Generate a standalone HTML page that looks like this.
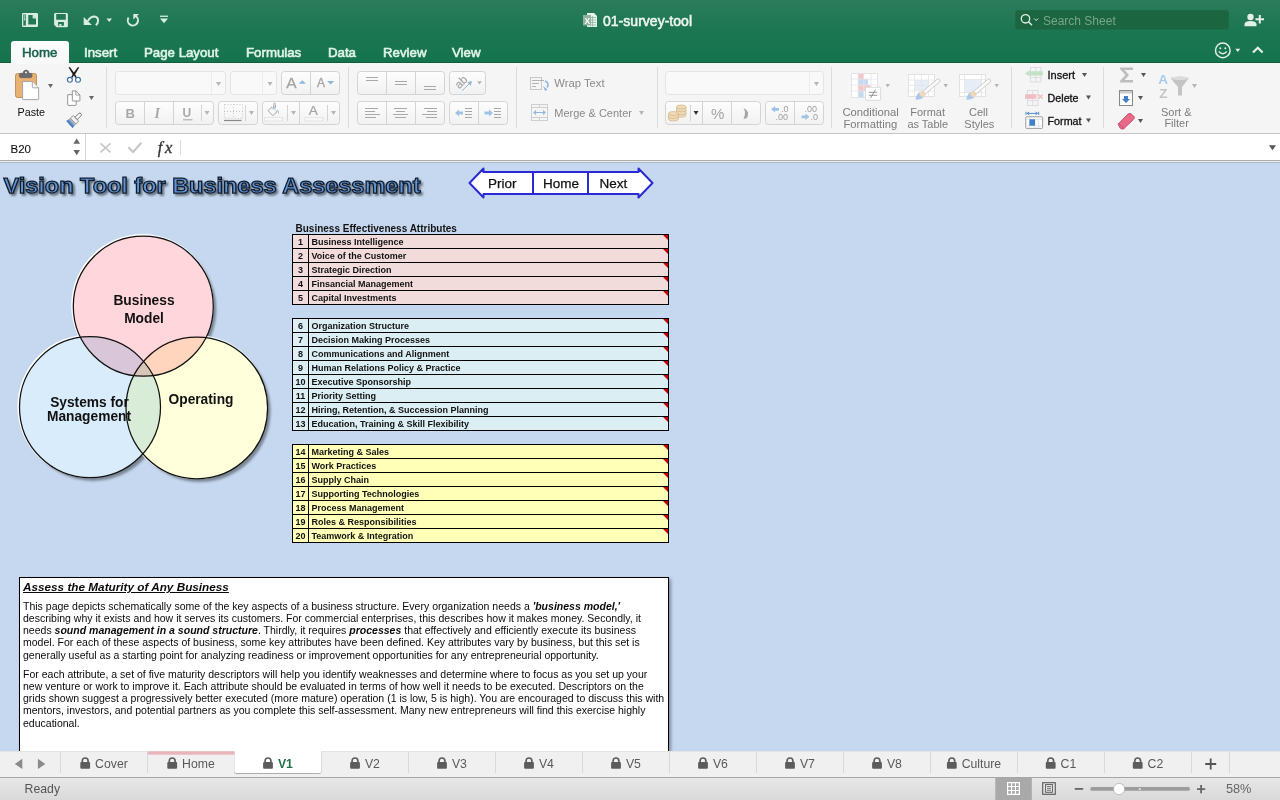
<!DOCTYPE html>
<html><head><meta charset="utf-8">
<style>
*{margin:0;padding:0;box-sizing:border-box}
html,body{width:1280px;height:800px;overflow:hidden;font-family:"Liberation Sans",sans-serif;background:#c5d8ef}
.a{position:absolute}
#title{left:0;top:0;width:1280px;height:63px;background:linear-gradient(#2b7c5a,#1c7652 50%,#14744e 98%);border-bottom:1px solid #195a3d}
#ribbon{left:0;top:63px;width:1280px;height:71px;background:#f5f5f5;border-top:1px solid #ecfbf3;border-bottom:1px solid #c6c6c6}
#fbar{left:0;top:134px;width:1280px;height:29px;background:#fff}
#sheet{left:0;top:163px;width:1280px;height:588px;background:#c5d8ef;overflow:hidden}
#tabs{left:0;top:751px;width:1280px;height:27px;background:#efefef;border-top:1px solid #d0d0d0;border-bottom:1px solid #b5b5b5}
#status{left:0;top:778px;width:1280px;height:22px;background:linear-gradient(#e3e3e3,#d9d9d9)}
.tab{color:#e0f3e7;font-size:13.25px;-webkit-text-stroke:0.6px #e0f3e7;top:45px;white-space:nowrap}

.tb{left:292px;width:377px;border:1px solid #000;border-bottom:none}
.tr{left:0;width:375px;height:14px;border-bottom:1px solid #000}
.tn{position:absolute;left:0;top:0;width:16px;height:13px;border-right:1px solid #000;text-align:center;font-size:9px;font-weight:bold;line-height:14.5px;color:#111}
.tt{position:absolute;left:18.5px;top:0;font-size:9px;font-weight:bold;line-height:14.5px;color:#111;white-space:nowrap}
.ci{position:absolute;right:0;top:0;width:0;height:0;border-top:5px solid #c00000;border-left:5px solid transparent}
#tbox{left:19px;top:414px;width:650px;height:200px;background:#fff;border:1.5px solid #000;box-shadow:2px 2px 3px rgba(40,50,70,0.45)}
#tbox p{position:absolute;left:3px;font-size:10.53px;line-height:12px;color:#0a0a0a;white-space:nowrap}
</style></head><body>
<div id="title" class="a">
  <div class="a" style="left:11px;top:41px;width:58px;height:23px;background:linear-gradient(#fcfcfc,#f8f8f8);border-radius:3px 3px 0 0;z-index:2"></div>
  <div class="a tab" style="left:22px;color:#1b6350;-webkit-text-stroke:0.55px #1b6350;z-index:3">Home</div>
  <div class="a tab" style="left:84px">Insert</div>
  <div class="a tab" style="left:144px">Page Layout</div>
  <div class="a tab" style="left:246px">Formulas</div>
  <div class="a tab" style="left:328px">Data</div>
  <div class="a tab" style="left:383px">Review</div>
  <div class="a tab" style="left:452px">View</div>
  <svg class="a" style="left:0;top:0" width="1280" height="63" viewBox="0 0 1280 63" font-family="Liberation Sans">
 <path fill-rule="evenodd" fill="#d8ecdf" d="M22 14.2 Q22 12.9 23.3 12.9 L36.7 12.9 Q38 12.9 38 14.2 L38 25.7 Q38 27 36.7 27 L23.3 27 Q22 27 22 25.7 Z M23.3 14.6 L25.8 14.6 L25.8 25.4 L23.3 25.4 Z M28.3 15 L32.6 15 L36 18.4 L36 24.6 L28.3 24.6 Z"/>
 <g fill="#d8ecdf"><circle cx="24.55" cy="15.9" r="0.75"/><circle cx="24.55" cy="17.9" r="0.75"/><circle cx="24.55" cy="19.7" r="0.75"/></g>
 <path d="M32.6 15 L32.6 17.2 Q32.6 18.4 33.8 18.4 L36 18.4 Z" fill="#d8ecdf"/>
 <path fill-rule="evenodd" fill="#d8ecdf" d="M54.1 14.2 Q54.1 12.9 55.4 12.9 L66.6 12.9 Q67.9 12.9 67.9 14.2 L67.9 25.9 Q67.9 27.2 66.6 27.2 L56.6 27.2 L54.1 24.7 Z M56.2 14.1 L65.8 14.1 L65.8 19.7 L56.2 19.7 Z M58.1 22 L63.9 22 L63.9 25.8 L58.1 25.8 Z"/>
 <rect x="59.3" y="24" width="2.1" height="1.8" fill="#d8ecdf"/>
 <path d="M83.7 17 L83.7 25 L91.9 25 Z" fill="#d8ecdf"/>
 <path d="M87.8 21 Q90.5 16.5 94.3 16.5 Q98.1 16.7 98.1 20.8 Q98.1 23.3 95.8 25.2" fill="none" stroke="#d8ecdf" stroke-width="2"/>
 <path d="M106.5 18.5 L112 18.5 L109.2 22 Z" fill="#d8ecdf"/>
 <path d="M128.6 17.6 A5.1 5.1 0 1 0 136 16.3" fill="none" stroke="#d8ecdf" stroke-width="2"/>
 <path d="M133.3 14 L139 14 L133.3 19.6 Z" fill="#d8ecdf"/>
 <rect x="160" y="15.6" width="8" height="1.3" fill="#d8ecdf"/>
 <path d="M160 18.5 L168 18.5 L164 23.2 Z" fill="#d8ecdf"/>
 <!-- excel doc icon -->
 <path d="M587 13 L594 13 L597 16 L597 27 L587 27 Z" fill="#e9f2ec"/>
 <g stroke="#8fb59e" stroke-width="0.8"><line x1="590" y1="17.5" x2="596" y2="17.5"/><line x1="590" y1="20" x2="596" y2="20"/><line x1="590" y1="22.5" x2="596" y2="22.5"/><line x1="590" y1="25" x2="596" y2="25"/><line x1="592.5" y1="16" x2="592.5" y2="26.5"/></g>
 <rect x="583" y="15" width="8" height="10.5" fill="#8fb39d"/>
 <text x="584.6" y="23.5" font-size="8.5" font-weight="bold" fill="#fff">X</text>
 <text x="603" y="26" font-size="14" fill="#eef6f1" stroke="#eef6f1" stroke-width="0.55" textLength="89">01-survey-tool</text>
 <!-- search box -->
 <rect x="1015.3" y="10.3" width="213.5" height="19.3" rx="3" fill="#1b6541"/>
 <circle cx="1025.5" cy="18.8" r="4.2" fill="none" stroke="#e1eee6" stroke-width="1.3"/>
 <line x1="1028.5" y1="21.8" x2="1032" y2="25.3" stroke="#e1eee6" stroke-width="1.5"/>
 <path d="M1034.2 18.5 L1036.2 20.5 L1038.2 18.5" fill="none" stroke="#e1eee6" stroke-width="1"/>
 <text x="1043" y="25.3" font-size="12" fill="#78a68b">Search Sheet</text>
 <!-- person add -->
 <circle cx="1250.5" cy="17" r="3.2" fill="#e4efe8"/>
 <path d="M1244.5 26.3 L1244.5 24 Q1245 21 1250.5 21 Q1256 21 1256.5 24 L1256.5 26.3 Z" fill="#e4efe8"/>
 <path d="M1259.8 15 L1259.8 23.5 M1255.5 19.2 L1264 19.2" stroke="#e4efe8" stroke-width="2"/>
 <!-- smiley -->
 <circle cx="1222.8" cy="50.4" r="7.3" fill="none" stroke="#e4efe8" stroke-width="1.5"/>
 <circle cx="1220.3" cy="48.3" r="1" fill="#e4efe8"/><circle cx="1225.3" cy="48.3" r="1" fill="#e4efe8"/>
 <path d="M1218.8 51.5 Q1222.8 56 1226.8 51.5" fill="none" stroke="#e4efe8" stroke-width="1.3"/>
 <path d="M1235.3 48.8 L1240.3 48.8 L1237.8 52 Z" fill="#e4efe8"/>
 <path d="M1253 52.5 L1257.8 47.8 L1262.6 52.5" fill="none" stroke="#e4efe8" stroke-width="2.2"/>
</svg>

</div>
<div id="ribbon" class="a"><svg class="a" style="left:0;top:-1px" width="1280" height="71" viewBox="0 63 1280 71" font-family="Liberation Sans">
 <defs>
  <linearGradient id="bg1" x1="0" y1="0" x2="0" y2="1"><stop offset="0" stop-color="#fdfdfd"/><stop offset="1" stop-color="#f1f1f1"/></linearGradient>
 </defs>
 <g stroke="#dcdcdc" stroke-width="1">
  <line x1="106.5" y1="67" x2="106.5" y2="128"/>
  <line x1="348.5" y1="67" x2="348.5" y2="128"/>
  <line x1="516.5" y1="67" x2="516.5" y2="128"/>
  <line x1="657.5" y1="67" x2="657.5" y2="128"/>
  <line x1="831.5" y1="67" x2="831.5" y2="128"/>
  <line x1="1011.5" y1="67" x2="1011.5" y2="128"/>
  <line x1="1103.5" y1="67" x2="1103.5" y2="128"/>
 </g>
 <!-- paste -->
 <rect x="15.5" y="73.5" width="21" height="24" rx="2" fill="#e9b272" stroke="#c08a55" stroke-width="0.9"/>
 <path d="M19.3 75 Q19.3 73.2 21.2 73.2 L23 73.2 Q23.3 70 26 70 Q28.7 70 29 73.2 L30.2 73.2 Q32.1 73.2 32.1 75 L32.1 75.8 Q32.1 77.7 30.2 77.7 L21.2 77.7 Q19.3 77.7 19.3 75.8 Z" fill="#6a6a6e" stroke="#555" stroke-width="0.5"/>
 <rect x="25" y="71.7" width="2" height="1.5" fill="#e8e8e8"/>
 <path d="M22.6 81.5 L32.3 81.5 L38.6 87.8 L38.6 99 Q38.6 99.6 38 99.6 L23.2 99.6 Q22.6 99.6 22.6 99 Z" fill="#fff" stroke="#9a9ea6" stroke-width="0.9"/>
 <path d="M32.3 81.5 L32.3 86.8 Q32.3 87.8 33.3 87.8 L38.6 87.8" fill="#f6f6f6" stroke="#9a9ea6" stroke-width="0.9"/>
 <path d="M48 84 L53 84 L50.5 88 Z" fill="#666"/>
 <text x="17.5" y="116" font-size="10.75" fill="#111">Paste</text>
 <!-- cut -->
 <path d="M68.6 67.6 L69.8 67 L75.2 74.2 L73.6 75.8 Z" fill="#1b1b1b"/>
 <path d="M79.2 67.6 L78 67 L72.6 74.2 L74.2 75.8 Z" fill="#1b1b1b"/>
 <path d="M73.9 72.5 L71 77.3 L72.2 77.9 L73.9 75.3 L75.6 77.9 L76.8 77.3 Z" fill="#1b1b1b"/>
 <circle cx="69.9" cy="79.8" r="2.45" fill="#fff" stroke="#3b70aa" stroke-width="1.15"/>
 <circle cx="78" cy="79.8" r="2.45" fill="#fff" stroke="#3b70aa" stroke-width="1.15"/>
 <!-- copy -->
 <path d="M67.7 94.7 L76.2 94.7 L76.2 104.9 Q76.2 105.4 75.7 105.4 L68.2 105.4 Q67.7 105.4 67.7 104.9 Z" fill="#fff" stroke="#8a8a8a" stroke-width="0.9"/>
 <path d="M72.3 90.9 L75.8 90.9 L79.9 95 L79.9 100.5 Q79.9 101 79.4 101 L72.8 101 Q72.3 101 72.3 100.5 Z" fill="#fff" stroke="#8a8a8a" stroke-width="0.9"/>
 <path d="M75.8 90.9 L75.8 95 L79.9 95" fill="none" stroke="#8a8a8a" stroke-width="0.8"/>
 <path d="M89 96 L94 96 L91.5 100 Z" fill="#666"/>
 <!-- brush -->
 <linearGradient id="brg" x1="0" y1="0" x2="1" y2="0"><stop offset="0" stop-color="#2b64ab"/><stop offset="0.5" stop-color="#6d9bd0"/><stop offset="1" stop-color="#d8c2ac"/></linearGradient>
 <g transform="translate(69.45,124.5) rotate(-43)">
  <path d="M0 -4.7 L5 -4.2 L5 4.2 L0 4.7 Z" fill="url(#brg)"/>
  <path d="M5 -4.2 L9 -3.8 L9 3.8 L5 4.2 Z" fill="#f3efec" stroke="#7d7d7d" stroke-width="0.7"/>
  <path d="M9 -1.6 L14.3 -1.6 Q15.9 -1.6 15.9 0 Q15.9 1.6 14.3 1.6 L9 1.6 Z" fill="#fbfbfb" stroke="#6f6f6f" stroke-width="0.85"/>
 </g>
 <!-- font boxes -->
 <g fill="#f9f9f9" stroke="#e4e4e4">
  <rect x="115.5" y="71.5" width="110" height="23" rx="3"/>
  <rect x="230.5" y="71.5" width="46" height="23" rx="3"/>
 </g>
 <g fill="url(#bg1)" stroke="#d4d4d4">
  <rect x="281.5" y="71.5" width="58" height="23" rx="3"/>
  <rect x="115.5" y="101.5" width="98" height="23" rx="3"/>
  <rect x="218.5" y="101.5" width="39" height="23" rx="3"/>
  <rect x="262.5" y="101.5" width="77" height="23" rx="3"/>
  <rect x="357.5" y="71.5" width="87" height="23" rx="3"/>
  <rect x="449.5" y="71.5" width="36" height="23" rx="3"/>
  <rect x="357.5" y="101.5" width="87" height="23" rx="3"/>
  <rect x="449.5" y="101.5" width="58" height="23" rx="3"/>
  <rect x="665.5" y="101.5" width="95" height="23" rx="3"/>
  <rect x="765.5" y="101.5" width="58" height="23" rx="3"/>
 </g>
 <rect x="665.5" y="71.5" width="158" height="23" rx="3" fill="#f9f9f9" stroke="#e4e4e4"/>
 <g stroke="#ececec">
  <line x1="211.5" y1="72" x2="211.5" y2="94"/>
  <line x1="262.5" y1="72" x2="262.5" y2="94"/>
  <line x1="809.5" y1="72" x2="809.5" y2="94"/>
 </g>
 <g stroke="#d4d4d4">
  <line x1="310.5" y1="72" x2="310.5" y2="94"/>
  <line x1="144.5" y1="102" x2="144.5" y2="124"/>
  <line x1="173.5" y1="102" x2="173.5" y2="124"/>
  <line x1="201.5" y1="105" x2="201.5" y2="121"/>
  <line x1="245.5" y1="105" x2="245.5" y2="121"/>
  <line x1="287.5" y1="105" x2="287.5" y2="121"/>
  <line x1="299.5" y1="102" x2="299.5" y2="124"/>
  <line x1="327.5" y1="105" x2="327.5" y2="121"/>
  <line x1="386.5" y1="72" x2="386.5" y2="94"/>
  <line x1="415.5" y1="72" x2="415.5" y2="94"/>
  <line x1="386.5" y1="102" x2="386.5" y2="124"/>
  <line x1="415.5" y1="102" x2="415.5" y2="124"/>
  <line x1="478.5" y1="102" x2="478.5" y2="124"/>
  <line x1="690.5" y1="105" x2="690.5" y2="121"/>
  <line x1="702.5" y1="102" x2="702.5" y2="124"/>
  <line x1="731.5" y1="102" x2="731.5" y2="124"/>
  <line x1="794.5" y1="102" x2="794.5" y2="124"/>
 </g>
 <!-- small dropdown arrows (gray) -->
 <g fill="#b5b5b5">
  <path d="M216 82 L221 82 L218.5 86 Z"/>
  <path d="M267.5 82 L272.5 82 L270 86 Z"/>
  <path d="M204.5 111 L209.5 111 L207 115 Z"/>
  <path d="M249 111 L254 111 L251.5 115 Z"/>
  <path d="M291 111 L296 111 L293.5 115 Z"/>
  <path d="M331 111 L336 111 L333.5 115 Z"/>
  <path d="M477 81.3 L482 81.3 L479.5 84.5 Z"/>
  <path d="M639 111 L644 111 L641.5 115 Z"/>
  <path d="M814 82 L819 82 L816.5 86 Z"/>
  <path d="M885.5 84 L890 84 L887.7 87.5 Z"/>
  <path d="M943.5 84 L948 84 L945.7 87.5 Z"/>
  <path d="M994.5 84 L999 84 L996.7 87.5 Z"/>
  <path d="M1192 84 L1197 84 L1194.5 88 Z"/>
 </g>
 <path d="M693.5 111 L698.5 111 L696 115 Z" fill="#333"/>
 <!-- A^ Av -->
 <text x="286.3" y="88" font-size="15.5" fill="#a3a3a3" stroke="#a3a3a3" stroke-width="0.3">A</text>
 <path d="M298.8 83.8 L305.9 83.8 L302.35 80.3 Z" fill="#8db7de"/>
 <text x="317" y="87" font-size="12" fill="#a3a3a3" stroke="#a3a3a3" stroke-width="0.3">A</text>
 <path d="M327 81 L334.3 81 L330.65 84.5 Z" fill="#8db7de"/>
 <!-- B I U -->
 <text x="125.5" y="118" font-size="13" font-weight="bold" fill="#a8a8a8">B</text>
 <text x="154.5" y="118" font-size="14" font-style="italic" font-weight="bold" fill="#a8a8a8" font-family="Liberation Serif">I</text>
 <text x="182.5" y="117" font-size="12" font-weight="bold" fill="#a8a8a8">U</text>
 <line x1="183" y1="119.8" x2="192.5" y2="119.8" stroke="#a8a8a8" stroke-width="1.1"/>
 <!-- border icon -->
 <g stroke="#c4c4c4" stroke-width="1" stroke-dasharray="1 2">
  <rect x="224.5" y="104.5" width="18" height="14" fill="none"/>
  <line x1="233.5" y1="104" x2="233.5" y2="119"/>
  <line x1="224" y1="111.5" x2="243" y2="111.5"/>
 </g>
 <line x1="224" y1="120.5" x2="241.5" y2="120.5" stroke="#888" stroke-width="1.2"/>
 <!-- fill bucket -->
 <path d="M268.1 110.6 L272 106.9 L277 111.9 L272.8 115.6 Z" fill="#fafafa" stroke="#a6a6a6" stroke-width="1"/>
 <path d="M270.5 108.6 L274.3 105.6 L276.6 111.5 Z" fill="#cfe3f5"/>
 <path d="M273.8 109 L273.8 104.5 Q273.8 103 274.6 103 Q275.4 103 275.4 104.5 L275.4 108" fill="none" stroke="#a0a0a0" stroke-width="0.9"/>
 <path d="M277 109.5 Q279.5 111 278.8 114 L278 112.5 Z" fill="#9fb2c4"/>
 <rect x="264.5" y="117.5" width="18" height="3.5" fill="#f7f7f7" stroke="#e2e2e2" stroke-width="0.8"/>
 <text x="308.8" y="115.3" font-size="13.5" fill="#a3a3a3" stroke="#a3a3a3" stroke-width="0.2">A</text>
 <rect x="305" y="117.5" width="18" height="3.5" fill="#f7f7f7" stroke="#e2e2e2" stroke-width="0.8"/>
 <!-- align icons -->
 <g stroke="#a8a8a8" stroke-width="1">
  <line x1="366" y1="77.5" x2="378" y2="77.5"/><line x1="366" y1="80.5" x2="378" y2="80.5"/>
  <line x1="395" y1="81.5" x2="407" y2="81.5"/><line x1="395" y1="84.5" x2="407" y2="84.5"/>
  <line x1="424" y1="86.5" x2="436" y2="86.5"/><line x1="424" y1="89.5" x2="436" y2="89.5"/>
  <line x1="365" y1="108.5" x2="378" y2="108.5"/><line x1="365" y1="111.5" x2="375" y2="111.5"/><line x1="365" y1="114.5" x2="380" y2="114.5"/><line x1="365" y1="117.5" x2="376" y2="117.5"/>
  <line x1="394" y1="108.5" x2="407" y2="108.5"/><line x1="396" y1="111.5" x2="405" y2="111.5"/><line x1="393" y1="114.5" x2="408" y2="114.5"/><line x1="395" y1="117.5" x2="406" y2="117.5"/>
  <line x1="424" y1="108.5" x2="437" y2="108.5"/><line x1="427" y1="111.5" x2="437" y2="111.5"/><line x1="422" y1="114.5" x2="437" y2="114.5"/><line x1="426" y1="117.5" x2="437" y2="117.5"/>
  <line x1="465" y1="108.5" x2="472" y2="108.5"/><line x1="465" y1="111.5" x2="472" y2="111.5"/><line x1="465" y1="114.5" x2="472" y2="114.5"/><line x1="465" y1="117.5" x2="472" y2="117.5"/>
  <line x1="494" y1="108.5" x2="501" y2="108.5"/><line x1="494" y1="111.5" x2="501" y2="111.5"/><line x1="494" y1="114.5" x2="501" y2="114.5"/><line x1="494" y1="117.5" x2="501" y2="117.5"/>
 </g>
 <path d="M455 113 L459 109.5 L459 111.5 L463 111.5 L463 114.5 L459 114.5 L459 116.5 Z" fill="#9fc3e6"/>
 <path d="M493 113 L489 109.5 L489 111.5 L484.5 111.5 L484.5 114.5 L489 114.5 L489 116.5 Z" fill="#9fc3e6"/>
 <!-- orientation ab -->
 <text x="0" y="0" transform="translate(459.2,89.2) rotate(-45)" font-size="11.5" fill="#a6a6a6" stroke="#a6a6a6" stroke-width="0.2">ab</text>
 <path d="M462 90.8 L470 83" stroke="#98b4cc" stroke-width="1" fill="none"/><path d="M472 81 L467.3 82.2 L470.8 85.7 Z" fill="#98b4cc"/>
 <!-- wrap text icon -->
 <g stroke="#c8c8c8" fill="none">
  <rect x="530.5" y="77.5" width="11" height="12"/>
 </g>
 <g stroke="#b3b3b3">
  <line x1="532" y1="80.5" x2="544" y2="80.5"/><line x1="532" y1="83.5" x2="539" y2="83.5"/><line x1="532" y1="86.5" x2="536" y2="86.5"/>
 </g>
 <path d="M545 81 Q550 83 547 87.5" fill="none" stroke="#8eb8e0" stroke-width="1.6"/>
 <path d="M543 86 L547.5 89.5 L545 91 Z" fill="#8eb8e0"/>
 <text x="554.3" y="87" font-size="11.25" fill="#8a8a8a">Wrap Text</text>
 <!-- merge icon -->
 <g stroke="#cfcfcf" fill="none">
  <rect x="531.5" y="104.5" width="16" height="16"/>
  <line x1="531.5" y1="107.5" x2="547.5" y2="107.5"/><line x1="531.5" y1="117.5" x2="547.5" y2="117.5"/>
  <line x1="539.5" y1="104.5" x2="539.5" y2="107.5"/><line x1="539.5" y1="117.5" x2="539.5" y2="120.5"/>
 </g>
 <path d="M534 112.5 L545 112.5 M536 110.5 L534 112.5 L536 114.5 M543 110.5 L545 112.5 L543 114.5" stroke="#8eb8e0" stroke-width="1.1" fill="none"/>
 <text x="554.3" y="117" font-size="11" fill="#8a8a8a">Merge &amp; Center</text>
 <!-- currency coins -->
 <g stroke="#cdb48c" stroke-width="0.7" fill="#f0dbb5">
  <path d="M676.5 107 L676.5 115.5 A4.8 2 0 0 0 686 115.5 L686 107 Z"/>
  <ellipse cx="681.3" cy="107" rx="4.8" ry="2"/>
  <path d="M676.5 110 A4.8 2 0 0 0 686 110 M676.5 113 A4.8 2 0 0 0 686 113" fill="none"/>
  <path d="M668.5 113.5 L668.5 119 A5 2 0 0 0 678.5 119 L678.5 113.5 Z"/>
  <ellipse cx="673.5" cy="113.5" rx="5" ry="2"/>
  <path d="M668.5 116.3 A5 2 0 0 0 678.5 116.3" fill="none"/>
 </g>
 <text x="711" y="118.5" font-size="15" fill="#a3a3a3">%</text>
 <path d="M743.5 108 Q749.5 110.5 747.5 117 Q746 119.5 743.5 118.5 Q746.5 113 743.5 108 Z" fill="#a5a5a5"/>
 <!-- decimal -->
 <path d="M771 109.2 L775.2 106 L775.2 108 L779 108 L779 110.8 L775.2 110.8 L775.2 112.6 Z" fill="#9fc3e6"/>
 <text x="781" y="112" font-size="9" fill="#a0a0a0">.0</text>
 <text x="775.5" y="120" font-size="9" fill="#a0a0a0">.00</text>
 <text x="804.5" y="112" font-size="9" fill="#a0a0a0">.00</text>
 <path d="M809.5 116.7 L805.3 113.5 L805.3 115.5 L801.5 115.5 L801.5 118.3 L805.3 118.3 L805.3 120 Z" fill="#9fc3e6"/>
 <text x="810.5" y="120" font-size="9" fill="#a0a0a0">.0</text>
 <!-- conditional formatting -->
 <rect x="851.5" y="73.5" width="26" height="24" fill="#fff" stroke="#e0e0e0" stroke-width="0.9"/>
 <rect x="858.1" y="73.8" width="5.7" height="5.3" fill="#f6c6cd"/>
 <rect x="858.1" y="79.1" width="10" height="5.9" fill="#c4daf1"/>
 <rect x="858.1" y="85" width="12.5" height="6" fill="#f6c6cd"/>
 <rect x="858.1" y="91" width="5.7" height="6.3" fill="#c4daf1"/>
 <g stroke="#e6e6e6" stroke-width="0.8">
  <line x1="851.5" y1="79.1" x2="877.5" y2="79.1"/><line x1="851.5" y1="85" x2="877.5" y2="85"/><line x1="851.5" y1="91" x2="877.5" y2="91"/>
  <line x1="858.1" y1="73.5" x2="858.1" y2="97.5"/><line x1="863.8" y1="73.5" x2="863.8" y2="97.5"/><line x1="871" y1="73.5" x2="871" y2="97.5"/>
 </g>
 <rect x="865.6" y="87.3" width="15" height="13" rx="0.8" fill="#fff" stroke="#d6d6d6" stroke-width="0.9"/>
 <path d="M868.8 92.3 L877.2 92.3 M868.8 95.3 L877.2 95.3 M875.5 89.5 L870.5 98.2" stroke="#8c8c8c" stroke-width="0.9"/>
 <!-- format as table / cell styles -->
 <rect x="908.5" y="74.5" width="26" height="22" fill="#fff" stroke="#dedede" stroke-width="0.9"/>
 <rect x="959.5" y="74.5" width="26" height="22" fill="#fff" stroke="#dedede" stroke-width="0.9"/>
 <rect x="914.5" y="80" width="14" height="11" fill="#e6edf7"/>
 <rect x="964.5" y="79.5" width="17" height="13" fill="#e6edf7"/>
 <g stroke="#e4e4e4" stroke-width="0.8">
  <line x1="908.5" y1="80" x2="934.5" y2="80"/><line x1="908.5" y1="85.5" x2="934.5" y2="85.5"/><line x1="908.5" y1="91" x2="934.5" y2="91"/>
  <line x1="914.5" y1="74.5" x2="914.5" y2="96.5"/><line x1="921.5" y1="74.5" x2="921.5" y2="96.5"/><line x1="928.5" y1="74.5" x2="928.5" y2="96.5"/>
  <line x1="959.5" y1="79.5" x2="985.5" y2="79.5"/><line x1="964.5" y1="74.5" x2="964.5" y2="96.5"/><line x1="981.5" y1="74.5" x2="981.5" y2="96.5"/><line x1="959.5" y1="92.5" x2="985.5" y2="92.5"/>
 </g>
 <g id="brush1" transform="translate(915.6,99.75) rotate(-40)">
  <path d="M0 0 Q3 -3.6 8 -3.3 L8 3.3 Q3 3.2 0 0 Z" fill="#a9c9ec"/>
  <ellipse cx="9" cy="0" rx="2.8" ry="3.3" fill="#f1d9b7"/>
  <path d="M11 -1.8 L29.5 -1.8 Q31.3 -1.8 31.3 0 Q31.3 1.8 29.5 1.8 L11 1.8 Z" fill="#fafafa" stroke="#c4c4c4" stroke-width="0.8"/>
 </g>
 <use href="#brush1" x="50.8" y="0"/>
 <text x="842.4" y="115.7" font-size="11.25" fill="#7c7c7c">Conditional</text>
 <text x="843.4" y="127.7" font-size="11.25" fill="#7c7c7c">Formatting</text>
 <text x="910.2" y="115.7" font-size="11" fill="#7c7c7c">Format</text>
 <text x="907.4" y="127.7" font-size="11" fill="#7c7c7c">as Table</text>
 <text x="969" y="115.7" font-size="11" fill="#7c7c7c">Cell</text>
 <text x="964.3" y="127.7" font-size="11" fill="#7c7c7c">Styles</text>
 <!-- insert/delete/format -->
 <g stroke="#dcdcdc" fill="none" stroke-width="0.9">
  <rect x="1030.5" y="67.5" width="10.5" height="14.5"/><line x1="1030.5" y1="77.5" x2="1041" y2="77.5"/><line x1="1035.7" y1="67.5" x2="1035.7" y2="82"/>
  <rect x="1027.5" y="90.5" width="10.5" height="15"/><line x1="1027.5" y1="95" x2="1038" y2="95"/><line x1="1027.5" y1="100.5" x2="1038" y2="100.5"/><line x1="1032.7" y1="90.5" x2="1032.7" y2="105.5"/>
 </g>
 <path d="M1025 73.4 L1029.5 70.2 L1029.5 71.3 L1042.8 71.3 L1042.8 75.5 L1029.5 75.5 L1029.5 76.6 Z" fill="#c3e2c8"/>
 <rect x="1025.1" y="94.3" width="11.2" height="4.6" fill="#f2bcc3"/>
 <path d="M1038.3 94.5 L1042.6 98.8 M1042.6 94.5 L1038.3 98.8" stroke="#f2bcc3" stroke-width="1.3"/>
 <rect x="1025.8" y="116.8" width="16.8" height="11.6" rx="0.8" fill="#fff" stroke="#9a9a9a" stroke-width="1"/>
 <g stroke="#dedede" stroke-width="0.8"><line x1="1026" y1="119.3" x2="1042.3" y2="119.3"/><line x1="1026" y1="125.8" x2="1042.3" y2="125.8"/><line x1="1029.3" y1="117" x2="1029.3" y2="128.3"/><line x1="1035" y1="117" x2="1035" y2="128.3"/><line x1="1038.6" y1="117" x2="1038.6" y2="128.3"/></g>
 <rect x="1029.4" y="119.3" width="5.6" height="6.4" fill="#3f80c8"/>
 <path d="M1027.2 113.4 L1037.5 113.4 M1029.2 112 L1027.2 113.4 L1029.2 114.8 M1035.5 112 L1037.5 113.4 L1035.5 114.8 M1026 111.8 L1026 115 M1038.7 111.8 L1038.7 115" stroke="#3f80c8" stroke-width="0.9" fill="none"/>
 <text x="1047.5" y="79" font-size="11" fill="#111" stroke="#111" stroke-width="0.3">Insert</text>
 <text x="1047.5" y="101.75" font-size="10.75" fill="#111" stroke="#111" stroke-width="0.3">Delete</text>
 <text x="1047.5" y="124.7" font-size="10.75" fill="#111" stroke="#111" stroke-width="0.3">Format</text>
 <g fill="#555">
  <path d="M1082 73 L1087 73 L1084.5 77 Z"/>
  <path d="M1086 95.5 L1091 95.5 L1088.5 99.5 Z"/>
  <path d="M1086 118.5 L1091 118.5 L1088.5 122.5 Z"/>
  <path d="M1141 73 L1146 73 L1143.5 77 Z"/>
  <path d="M1138 96 L1143 96 L1140.5 100 Z"/>
  <path d="M1138 119 L1143 119 L1140.5 123 Z"/>
 </g>
 <!-- sigma -->
 <path d="M1120 67.5 L1133 67.5 L1133 70 L1124.5 70 L1129 75 L1124.5 80 L1133 80 L1133 82.5 L1120 82.5 L1120 81 L1125.5 75 L1120 69 Z" fill="#bdbdbd"/>
 <!-- fill down -->
 <rect x="1119.5" y="90.5" width="13" height="15" fill="#fff" stroke="#888"/>
 <rect x="1120" y="91" width="12" height="2.5" fill="#ccc"/>
 <path d="M1124 96 L1128 96 L1128 99 L1130 99 L1126 103 L1122 99 L1124 99 Z" fill="#3f80c8"/>
 <!-- eraser -->
 <path d="M1118 124 L1128 114 Q1130 112.5 1132 114.5 L1134 116.5 Q1135 118 1133.5 119.5 L1124 128.5 Q1122 130 1120 128 Z" fill="#e96a86" stroke="#c04865" stroke-width="0.8"/>
 <path d="M1118.5 123.5 L1124.5 129" stroke="#c04865" stroke-width="0.8"/>
 <!-- sort filter -->
 <text x="1158.3" y="84" font-size="13.5" font-weight="bold" fill="#a9cbee">A</text>
 <text x="1159.3" y="97.5" font-size="13.5" font-weight="bold" fill="#c4c4c4">Z</text>
 <path d="M1170.5 78 Q1180 75 1189 78 L1182 87 L1182 95.5 L1178 95.5 L1178 87 Z" fill="#c4c4c4"/>
 <ellipse cx="1179.8" cy="78.3" rx="8.5" ry="1.8" fill="#dcdcdc"/>
 <text x="1161" y="116" font-size="11" fill="#7c7c7c">Sort &amp;</text>
 <text x="1164.4" y="127" font-size="11" fill="#7c7c7c">Filter</text>
</svg>
</div>
<div id="fbar" class="a">
<svg class="a" style="left:0;top:0" width="1280" height="29" viewBox="0 134 1280 29" font-family="Liberation Sans">
 <text x="10.5" y="152.7" font-size="11.5" fill="#111" stroke="#111" stroke-width="0.1">B20</text>
 <path d="M73.4 143.8 L80 143.8 L76.7 138.6 Z M73.4 150 L80 150 L76.7 155.3 Z" fill="#666"/>
 <line x1="85.5" y1="134" x2="85.5" y2="160" stroke="#d6d6d6"/>
 <path d="M100.5 143.3 L110.5 152.3 M110.5 143.3 L100.5 152.3" stroke="#c6c6c6" stroke-width="1.6"/>
 <path d="M128.3 147.3 L133 152 L141.4 142.8" fill="none" stroke="#c6c6c6" stroke-width="2.2"/>
 <text x="157.8" y="152.8" font-family="Liberation Serif" font-style="italic" font-size="16.5" fill="#333" stroke="#333" stroke-width="0.35" textLength="14.5">fx</text>
 <line x1="180.5" y1="140" x2="180.5" y2="155" stroke="#dedede"/>
 <path d="M1269 145.2 L1276 145.2 L1272.5 150.2 Z" fill="#555"/>
 <rect x="0" y="160" width="1280" height="1" fill="#acacac"/>
 <rect x="0" y="161" width="1280" height="1" fill="#ededed"/>
 <rect x="0" y="162" width="1280" height="1" fill="#aab8c8"/>
</svg>
</div>
<div id="sheet" class="a">
<svg class="a" style="left:0;top:0" width="700" height="400" viewBox="0 163 700 400">
 <defs>
  <filter id="sh" x="-20%" y="-20%" width="150%" height="150%"><feDropShadow dx="3" dy="3.2" stdDeviation="1" flood-color="#4a4f58" flood-opacity="0.6"/></filter>
  <filter id="tsh" x="-5%" y="-30%" width="110%" height="160%"><feGaussianBlur in="SourceAlpha" stdDeviation="1.2"/><feOffset dx="1.5" dy="1.5"/><feComponentTransfer><feFuncA type="linear" slope="0.5"/></feComponentTransfer><feMerge><feMergeNode/><feMergeNode in="SourceGraphic"/></feMerge></filter>
 </defs>
 <text x="3.5" y="193.3" font-family="Liberation Sans" font-weight="bold" font-size="22.4" fill="#6194d6" stroke="#111c2c" stroke-width="1.25" filter="url(#tsh)" textLength="417" lengthAdjust="spacingAndGlyphs">Vision Tool for Business Assessment</text>
 <g filter="url(#sh)">
  <circle cx="143.3" cy="306.2" r="70" fill="#fff"/>
  <circle cx="90" cy="407.2" r="70.5" fill="#fff"/>
  <circle cx="196.8" cy="408" r="70.8" fill="#fff"/>
 </g>
 <g fill="#fff">
  <circle cx="142.5" cy="305.4" r="71.3"/>
  <circle cx="89.2" cy="406.4" r="71.8"/>
  <circle cx="196" cy="407.2" r="72.1"/>
 </g>
 <g style="isolation:isolate">
  <circle cx="143.3" cy="306.2" r="70" fill="#ffd6dc" style="mix-blend-mode:multiply"/>
  <circle cx="90" cy="407.2" r="70.5" fill="#d9ecfb" style="mix-blend-mode:multiply"/>
  <circle cx="196.8" cy="408" r="70.8" fill="#ffffdb" style="mix-blend-mode:multiply"/>
 </g>
 <circle cx="143.3" cy="306.2" r="70" fill="none" stroke="#111" stroke-width="1.25"/>
 <circle cx="90" cy="407.2" r="70.5" fill="none" stroke="#111" stroke-width="1.25"/>
 <circle cx="196.8" cy="408" r="70.8" fill="none" stroke="#111" stroke-width="1.25"/>
 <g font-family="Liberation Sans" font-weight="bold" font-size="13.75" fill="#111" text-anchor="middle">
  <text x="144" y="305">Business</text><text x="144" y="323">Model</text>
  <text x="89.5" y="407">Systems for</text><text x="89" y="421">Management</text>
  <text x="201" y="404">Operating</text>
 </g>
 <path d="M469.5 183 L483.5 168.5 L483.5 172 L638.5 172 L638.5 168.5 L652.5 183 L638.5 197.5 L638.5 194 L483.5 194 L483.5 197.5 Z" fill="#fff" stroke="#2a2ad4" stroke-width="2" stroke-linejoin="round"/>
 <line x1="533" y1="172" x2="533" y2="194" stroke="#2a2ad4" stroke-width="2"/>
 <line x1="588" y1="172" x2="588" y2="194" stroke="#2a2ad4" stroke-width="2"/>
 <g font-family="Liberation Sans" font-size="13.5" fill="#111" stroke="#111" stroke-width="0.25">
  <text x="488" y="188">Prior</text><text x="543" y="188">Home</text><text x="599.5" y="188">Next</text>
 </g>
 <text x="295.5" y="232" font-family="Liberation Sans" font-weight="bold" font-size="10" fill="#111">Business Effectiveness Attributes</text>
</svg>
<div class="a tb" style="top:71px;height:71px;background:#f2dcdb">
<div class="a tr" style="top:0px"><span class="tn">1</span><span class="tt">Business Intelligence</span><i class="ci"></i></div>
<div class="a tr" style="top:14px"><span class="tn">2</span><span class="tt">Voice of the Customer</span><i class="ci"></i></div>
<div class="a tr" style="top:28px"><span class="tn">3</span><span class="tt">Strategic Direction</span><i class="ci"></i></div>
<div class="a tr" style="top:42px"><span class="tn">4</span><span class="tt">Finsancial Management</span><i class="ci"></i></div>
<div class="a tr" style="top:56px"><span class="tn">5</span><span class="tt">Capital Investments</span><i class="ci"></i></div>
</div>
<div class="a tb" style="top:155px;height:113px;background:#daeef3">
<div class="a tr" style="top:0px"><span class="tn">6</span><span class="tt">Organization Structure</span><i class="ci"></i></div>
<div class="a tr" style="top:14px"><span class="tn">7</span><span class="tt">Decision Making Processes</span><i class="ci"></i></div>
<div class="a tr" style="top:28px"><span class="tn">8</span><span class="tt">Communications and Alignment</span><i class="ci"></i></div>
<div class="a tr" style="top:42px"><span class="tn">9</span><span class="tt">Human Relations Policy &amp; Practice</span><i class="ci"></i></div>
<div class="a tr" style="top:56px"><span class="tn">10</span><span class="tt">Executive Sponsorship</span><i class="ci"></i></div>
<div class="a tr" style="top:70px"><span class="tn">11</span><span class="tt">Priority Setting</span><i class="ci"></i></div>
<div class="a tr" style="top:84px"><span class="tn">12</span><span class="tt">Hiring, Retention, &amp; Succession Planning</span><i class="ci"></i></div>
<div class="a tr" style="top:98px"><span class="tn">13</span><span class="tt">Education, Training &amp; Skill Flexibility</span><i class="ci"></i></div>
</div>
<div class="a tb" style="top:281px;height:99px;background:#ffffb8">
<div class="a tr" style="top:0px"><span class="tn">14</span><span class="tt">Marketing &amp; Sales</span><i class="ci"></i></div>
<div class="a tr" style="top:14px"><span class="tn">15</span><span class="tt">Work Practices</span><i class="ci"></i></div>
<div class="a tr" style="top:28px"><span class="tn">16</span><span class="tt">Supply Chain</span><i class="ci"></i></div>
<div class="a tr" style="top:42px"><span class="tn">17</span><span class="tt">Supporting Technologies</span><i class="ci"></i></div>
<div class="a tr" style="top:56px"><span class="tn">18</span><span class="tt">Process Management</span><i class="ci"></i></div>
<div class="a tr" style="top:70px"><span class="tn">19</span><span class="tt">Roles &amp; Responsibilities</span><i class="ci"></i></div>
<div class="a tr" style="top:84px"><span class="tn">20</span><span class="tt">Teamwork &amp; Integration</span><i class="ci"></i></div>
</div>

<div id="tbox" class="a">
 <p style="top:2px;font-size:11.75px;font-weight:bold;font-style:italic;text-decoration:underline;line-height:14px">Assess the Maturity of Any Business</p>
 <p style="top:21.6px;line-height:12.3px">This page depicts schematically some of the key aspects of a business structure. Every organization needs a <b><i>'business model,'</i></b><br>describing why it exists and how it serves its customers. For commercial enterprises, this describes how it makes money. Secondly, it<br>needs <b><i>sound management in a sound structure</i></b>. Thirdly, it requires <b><i>processes</i></b> that effectively and efficiently execute its business<br>model. For each of these aspects of business, some key attributes have been defined. Key attributes vary by business, but this set is<br>generally useful as a starting point for analyzing readiness or improvement opportunities for any entrepreneurial opportunity.</p>
 <p style="top:89.7px;line-height:12.2px">For each attribute, a set of five maturity descriptors will help you identify weaknesses and determine where to focus as you set up your<br>new venture or work to improve it. Each attribute should be evaluated in terms of how well it needs to be executed. Descriptors on the<br>grids shown suggest a progressively better executed (more mature) operation (1 is low, 5 is high). You are encouraged to discuss this with<br>mentors, investors, and potential partners as you complete this self-assessment. Many new entrepreneurs will find this exercise highly<br>educational.</p>
</div>
</div>
<div id="bottom" class="a" style="left:0;top:751px;width:1280px;height:49px"><svg class="a" style="left:0;top:0" width="1280" height="49" viewBox="0 751 1280 49" font-family="Liberation Sans">
 <defs><g id="lk"><path d="M2 4.2 L2 3 Q2 0 4.9 0 Q7.8 0 7.8 3 L7.8 4.2" fill="none" stroke="#5c5c5c" stroke-width="1.7"/><rect x="0" y="3.9" width="9.8" height="6.9" rx="1" fill="#5c5c5c"/></g>
  <linearGradient id="stg" x1="0" y1="0" x2="0" y2="1"><stop offset="0" stop-color="#e7e7e7"/><stop offset="1" stop-color="#d9d9d9"/></linearGradient>
  <filter id="tabsh" x="-10%" y="-20%" width="120%" height="150%"><feDropShadow dx="0" dy="0.8" stdDeviation="0.6" flood-color="#000" flood-opacity="0.35"/></filter></defs>
 <rect x="0" y="751" width="1280" height="26" fill="#f0f0f0"/>
 <rect x="0" y="751" width="1280" height="0.6" fill="#dcdcdc"/>
 <rect x="0" y="777" width="1280" height="1" fill="#a6a6a6"/>
 <rect x="0" y="778" width="1280" height="22" fill="url(#stg)"/>
 <path d="M22.3 758.8 L22.3 769 L14.8 763.9 Z M37.9 758.8 L37.9 769 L45.3 763.9 Z" fill="#8a8a8a"/>
 <line x1="60.5" y1="752" x2="60.5" y2="773" stroke="#d9d9d9"/>
 <line x1="147.5" y1="752" x2="147.5" y2="773" stroke="#d9d9d9"/>
 <line x1="234.5" y1="752" x2="234.5" y2="773" stroke="#d9d9d9"/>
 <line x1="321.5" y1="752" x2="321.5" y2="773" stroke="#d9d9d9"/>
 <line x1="408.5" y1="752" x2="408.5" y2="773" stroke="#d9d9d9"/>
 <line x1="495.5" y1="752" x2="495.5" y2="773" stroke="#d9d9d9"/>
 <line x1="582.5" y1="752" x2="582.5" y2="773" stroke="#d9d9d9"/>
 <line x1="669.5" y1="752" x2="669.5" y2="773" stroke="#d9d9d9"/>
 <line x1="756.5" y1="752" x2="756.5" y2="773" stroke="#d9d9d9"/>
 <line x1="843.5" y1="752" x2="843.5" y2="773" stroke="#d9d9d9"/>
 <line x1="930.5" y1="752" x2="930.5" y2="773" stroke="#d9d9d9"/>
 <line x1="1017.5" y1="752" x2="1017.5" y2="773" stroke="#d9d9d9"/>
 <line x1="1104.5" y1="752" x2="1104.5" y2="773" stroke="#d9d9d9"/>
 <line x1="1191.5" y1="752" x2="1191.5" y2="773" stroke="#d9d9d9"/>
 <line x1="1229.5" y1="752" x2="1229.5" y2="773" stroke="#d9d9d9"/>
 <path d="M234.5 751 L321.2 751 L321.2 771 Q321.2 773 319.2 773 L236.5 773 Q234.5 773 234.5 771 Z" fill="#fff" filter="url(#tabsh)"/>
 <rect x="0" y="751" width="1280" height="0" fill="none"/>
 <rect x="147.8" y="751.3" width="86.7" height="3.4" fill="#e8b6b9"/>
 <use href="#lk" x="80.3" y="758"/>
 <text x="95.1" y="768" font-size="12.25" fill="#595959">Cover</text>
 <use href="#lk" x="167.3" y="758"/>
 <text x="182.1" y="768" font-size="12.25" fill="#595959">Home</text>
 <use href="#lk" x="263.1" y="758"/>
 <text x="277.9" y="768" font-size="12.25" font-weight="bold" fill="#217346">V1</text>
 <use href="#lk" x="350.1" y="758"/>
 <text x="364.9" y="768" font-size="12.25" fill="#595959">V2</text>
 <use href="#lk" x="437.1" y="758"/>
 <text x="451.9" y="768" font-size="12.25" fill="#595959">V3</text>
 <use href="#lk" x="524.1" y="758"/>
 <text x="538.9" y="768" font-size="12.25" fill="#595959">V4</text>
 <use href="#lk" x="611.1" y="758"/>
 <text x="625.9" y="768" font-size="12.25" fill="#595959">V5</text>
 <use href="#lk" x="698.1" y="758"/>
 <text x="712.9" y="768" font-size="12.25" fill="#595959">V6</text>
 <use href="#lk" x="785.1" y="758"/>
 <text x="799.9" y="768" font-size="12.25" fill="#595959">V7</text>
 <use href="#lk" x="872.1" y="758"/>
 <text x="886.9" y="768" font-size="12.25" fill="#595959">V8</text>
 <use href="#lk" x="946.9" y="758"/>
 <text x="961.7" y="768" font-size="12.25" fill="#595959">Culture</text>
 <use href="#lk" x="1045.8" y="758"/>
 <text x="1060.6" y="768" font-size="12.25" fill="#595959">C1</text>
 <use href="#lk" x="1132.8" y="758"/>
 <text x="1147.6" y="768" font-size="12.25" fill="#595959">C2</text>
 <path d="M1210.7 758.5 L1210.7 769.5 M1205.2 764 L1216.2 764" stroke="#555" stroke-width="1.8"/>
 <text x="24.6" y="792.75" font-size="12.25" fill="#555">Ready</text>
 <rect x="995.3" y="777.6" width="36.5" height="22.4" fill="#a9a9a9"/>
 <path fill-rule="evenodd" fill="#fff" d="M1007 782 L1020 782 L1020 795 L1007 795 Z M1008.2 783.2 L1011 783.2 L1011 786 L1008.2 786 Z M1012.1 783.2 L1014.9 783.2 L1014.9 786 L1012.1 786 Z M1016 783.2 L1018.8 783.2 L1018.8 786 L1016 786 Z M1008.2 787.1 L1011 787.1 L1011 789.9 L1008.2 789.9 Z M1012.1 787.1 L1014.9 787.1 L1014.9 789.9 L1012.1 789.9 Z M1016 787.1 L1018.8 787.1 L1018.8 789.9 L1016 789.9 Z M1008.2 791 L1011 791 L1011 793.8 L1008.2 793.8 Z M1012.1 791 L1014.9 791 L1014.9 793.8 L1012.1 793.8 Z M1016 791 L1018.8 791 L1018.8 793.8 L1016 793.8 Z"/>
 <rect x="1042.7" y="782.7" width="12.6" height="11.6" fill="none" stroke="#5a5a5a" stroke-width="1.1"/>
 <rect x="1045.6" y="784.5" width="6.8" height="7.8" fill="none" stroke="#5a5a5a" stroke-width="0.9"/>
 <g stroke="#5a5a5a" stroke-width="0.8"><line x1="1047" y1="786.5" x2="1051" y2="786.5"/><line x1="1047" y1="788.4" x2="1051" y2="788.4"/><line x1="1047" y1="790.3" x2="1051" y2="790.3"/></g>
 <rect x="1074.8" y="788" width="8.4" height="1.8" fill="#666"/>
 <rect x="1090.2" y="787" width="99.8" height="3.8" rx="1.9" fill="#9c9c9c"/>
 <circle cx="1139.8" cy="788.9" r="1" fill="#eee"/>
 <circle cx="1119.1" cy="789" r="5.6" fill="#fff" stroke="#a0a0a0" stroke-width="0.6"/>
 <path d="M1197 789.1 L1205.2 789.1 M1201.1 785 L1201.1 793.3" stroke="#666" stroke-width="1.8"/>
 <text x="1225.9" y="793.3" font-size="12.75" fill="#666">58%</text>
</svg>
</div>
</body></html>
